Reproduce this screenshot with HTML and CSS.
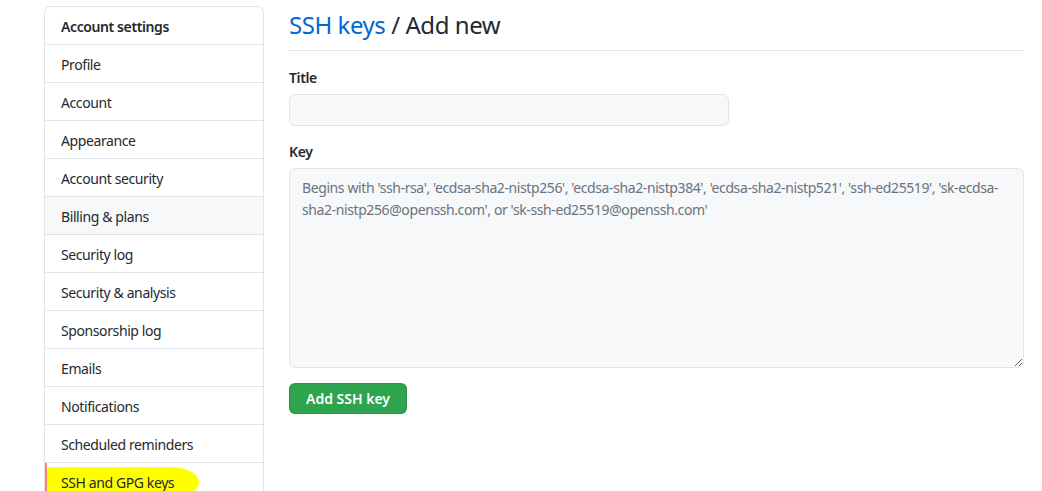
FILE: index.html
```html
<!DOCTYPE html>
<html lang="en">
<head>
<meta charset="UTF-8">
<meta name="viewport" content="width=device-width,initial-scale=1">
<title>Add new SSH key</title>
<link rel="stylesheet" href="styles.css">
</head>
<body>

<div class="layout">
  <!-- sidebar menu -->
  <nav class="menu">
    <h3 class="menu-head">Account settings</h3>
    <a class="menu-item" href="#">Profile</a>
    <a class="menu-item" href="#">Account</a>
    <a class="menu-item" href="#">Appearance</a>
    <a class="menu-item" href="#">Account security</a>
    <a class="menu-item hover" href="#">Billing &amp; plans</a>
    <a class="menu-item" href="#">Security log</a>
    <a class="menu-item" href="#">Security &amp; analysis</a>
    <a class="menu-item" href="#">Sponsorship log</a>
    <a class="menu-item" href="#">Emails</a>
    <a class="menu-item" href="#">Notifications</a>
    <a class="menu-item" href="#">Scheduled reminders</a>
    <a class="menu-item selected" href="#"><span class="marker"></span><span class="label">SSH and GPG keys</span></a>
  </nav>

  <!-- main form -->
  <main class="content">
    <h2 class="page-title"><a href="#">SSH keys</a> / Add new</h2>
    <form class="form">
      <label class="field">
        <span class="field-label">Title</span>
        <input type="text" class="input title-input">
      </label>
      <label class="field key-field">
        <span class="field-label">Key</span>
        <textarea class="input key-input" placeholder="Begins with 'ssh-rsa', 'ecdsa-sha2-nistp256', 'ecdsa-sha2-nistp384', 'ecdsa-sha2-nistp521', 'ssh-ed25519', 'sk-ecdsa-sha2-nistp256@openssh.com', or 'sk-ssh-ed25519@openssh.com'"></textarea>
      </label>
      <div><button type="button" class="btn">Add SSH key</button></div>
    </form>
  </main>
</div>

</body>
</html>
```

FILE: styles.css
```css
:root{
  --border:#e1e4e8;
  --muted-bg:#f6f8fa;
  --text:#24292e;
  --link:#0366d6;
  --green:#2ea44f;
  font-family:"Noto Sans","Open Sans",Arial,sans-serif;
}
*{box-sizing:border-box;margin:0;padding:0}
body{background:#fff;color:var(--text);font-size:14px;letter-spacing:-.4px;overflow:hidden}

.layout{display:flex;gap:25px;padding:6px 18px 0 44px;align-items:flex-start}

/* ── sidebar ── */
.menu{width:220px;flex:none;border:1px solid var(--border);border-radius:6px 6px 0 0;border-bottom:none;display:flex;flex-direction:column}
.menu-head{font-size:14px;font-weight:600;height:38px;line-height:37px;padding:1px 16px 0;border-bottom:1px solid var(--border)}
.menu-item{display:block;position:relative;height:38px;line-height:37px;padding:1px 16px 0;color:var(--text);text-decoration:none;border-bottom:1px solid var(--border)}
.menu-item.hover{background:var(--muted-bg)}
.menu-item.selected{border-left:2px solid #f9826c;padding-left:14px}
.menu-item .label{position:relative}
.marker{position:absolute;left:0;top:4px;width:152px;height:28px;background:#ffff00;border-radius:3px 30px 20px 2px / 8px 60% 50% 4px}

/* ── content ── */
.content{flex:1;min-width:0}
.page-title{font-size:24px;font-weight:400;line-height:36px;padding:1px 0 7px;border-bottom:1px solid var(--border);margin-bottom:17px;letter-spacing:-.45px}
.page-title a{color:var(--link);text-decoration:none}

.form{display:flex;flex-direction:column}
.field{display:flex;flex-direction:column;margin-bottom:16px}
.key-field{margin-bottom:15px}
.field-label{font-weight:600;line-height:20px;margin-bottom:6px}
.input{font:inherit;font-size:14px;letter-spacing:-.4px;color:var(--text);background:var(--muted-bg);border:1px solid var(--border);border-radius:6px;padding:5px 12px;line-height:20px;outline:none}
.title-input{width:440px;height:32px}
.key-input{width:100%;height:200px;padding:8px 12px;line-height:22px;resize:vertical}
.key-input::placeholder{color:#6a737d;opacity:1}

.btn{font:inherit;font-weight:600;font-size:14px;color:#fff;background:var(--green);border:1px solid rgba(27,31,35,.15);border-radius:6px;height:31px;padding:0 16px;cursor:pointer}
```
